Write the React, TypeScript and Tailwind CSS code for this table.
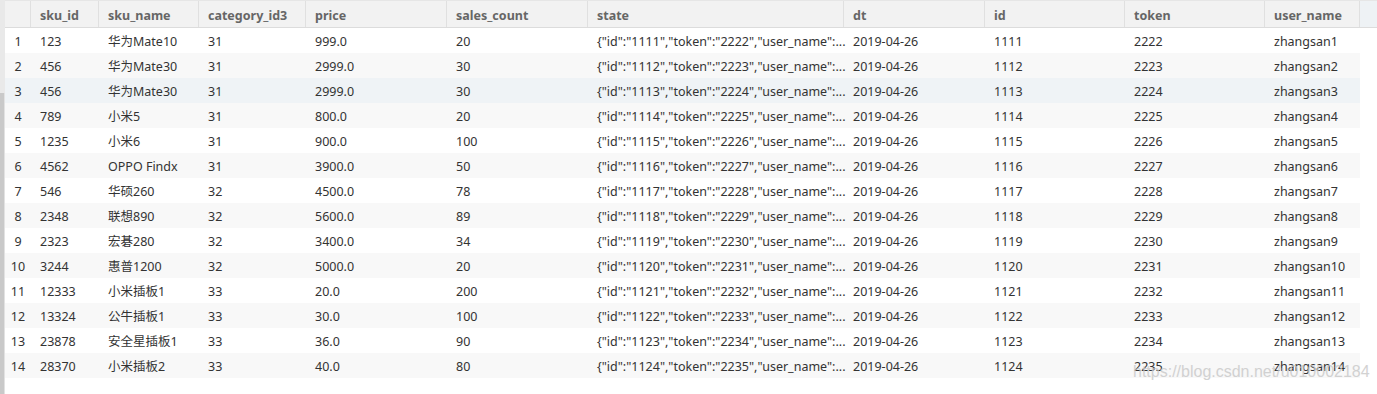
import React from "react";

const cols = [
  { key: "sku_id", w: "w-[68px]" },
  { key: "sku_name", w: "w-[100px]" },
  { key: "category_id3", w: "w-[107px]" },
  { key: "price", w: "w-[141px]" },
  { key: "sales_count", w: "w-[141px]" },
  { key: "state", w: "w-[256px]" },
  { key: "dt", w: "w-[141px]" },
  { key: "id", w: "w-[140px]" },
  { key: "token", w: "w-[140px]" },
  { key: "user_name", w: "w-[95px]" },
];

const base: [string, string, string, string, string][] = [
  ["123", "华为Mate10", "31", "999.0", "20"],
  ["456", "华为Mate30", "31", "2999.0", "30"],
  ["456", "华为Mate30", "31", "2999.0", "30"],
  ["789", "小米5", "31", "800.0", "20"],
  ["1235", "小米6", "31", "900.0", "100"],
  ["4562", "OPPO Findx", "31", "3900.0", "50"],
  ["546", "华硕260", "32", "4500.0", "78"],
  ["2348", "联想890", "32", "5600.0", "89"],
  ["2323", "宏碁280", "32", "3400.0", "34"],
  ["3244", "惠普1200", "32", "5000.0", "20"],
  ["12333", "小米插板1", "33", "20.0", "200"],
  ["13324", "公牛插板1", "33", "30.0", "100"],
  ["23878", "安全星插板1", "33", "36.0", "90"],
  ["28370", "小米插板2", "33", "40.0", "80"],
];

const rows = base.map((b, i) => {
  const id = String(1111 + i);
  const token = String(2222 + i);
  return [
    ...b,
    `{"id":"${id}","token":"${token}","user_name":...`,
    "2019-04-26",
    id,
    token,
    `zhangsan${i + 1}`,
  ];
});

export default function App() {
  return (
    <div
      className="relative flex w-[1377px] h-[394px] bg-white overflow-hidden text-[12.5px]"
      style={{ fontFamily: '"Noto Sans", "Noto Sans CJK SC", sans-serif' }}
    >
      <div className="flex flex-col w-[5px] shrink-0">
        <div className="h-[93px] bg-[#e9e9e9]" />
        <div className="flex-1 bg-[#c9c9c9] border-r border-[#e2e2e2]" />
      </div>
      <div className="flex flex-col flex-1">
        <div className="flex h-[28px] bg-[#f2f2f2] border-b border-[#dcdcdc] border-t border-t-[#e6e6e6]">
          <div className="w-[26px] shrink-0 border-r border-[#e0e0e0]" />
          {cols.map((c) => (
            <div
              key={c.key}
              className={`${c.w} shrink-0 border-r border-[#e0e0e0] pl-[9px] pt-[4px] flex items-center font-bold text-[#666666] whitespace-nowrap`}
            >
              {c.key}
            </div>
          ))}
          <div className="flex-1 bg-[#eef2f5]" />
        </div>
        {rows.map((r, i) => (
          <div key={i} className="flex h-[25px]">
            <div
              className={`flex w-[1355px] ${
                i === 2 ? "bg-[#eff3f6]" : i % 2 === 1 ? "bg-[#f8f8f8]" : "bg-white"
              }`}
            >
              <div className="w-[26px] shrink-0 pt-[3px] flex items-center justify-center text-[#333333]">
                {i + 1}
              </div>
              {cols.map((c, j) => (
                <div
                  key={c.key}
                  className={`${c.w} shrink-0 pl-[9px] pt-[3px] flex items-center text-[#333333] whitespace-nowrap`}
                >
                  {r[j]}
                </div>
              ))}
            </div>
          </div>
        ))}
      </div>
      <div
        className="absolute left-[1133px] top-[362px] text-[16px] leading-[20px] text-[#c8c8c8] opacity-80 whitespace-nowrap"
        style={{ fontFamily: '"Liberation Sans", Arial, sans-serif' }}
      >
        https://blog.csdn.net/u010002184
      </div>
    </div>
  );
}
